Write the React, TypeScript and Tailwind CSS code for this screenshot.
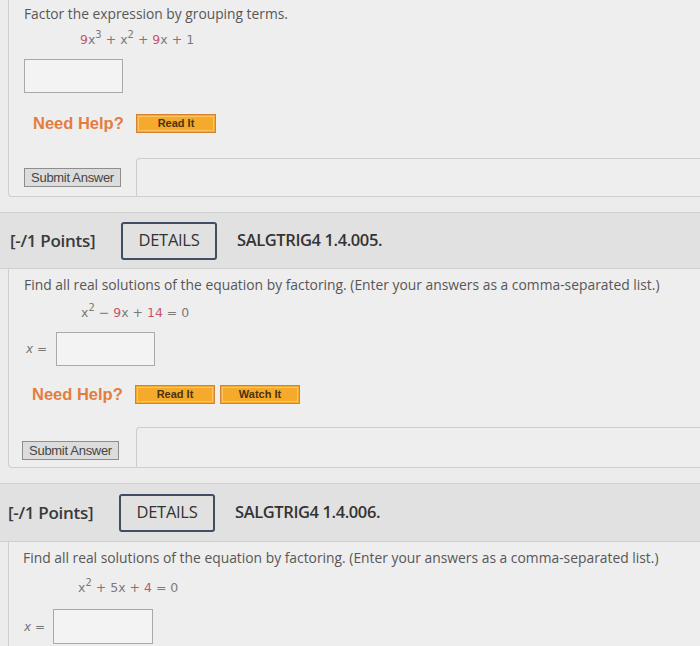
import React from "react";

const sans = { fontFamily: "'Open Sans', 'Noto Sans', sans-serif" };

function Eq({ children }: { children: React.ReactNode }) {
  return (
    <div className="text-[12.5px] leading-[16px] text-[#7a7a7a]" style={{ fontFamily: "'DejaVu Sans', Verdana, sans-serif" }}>
      {children}
    </div>
  );
}

function R({ children }: { children: React.ReactNode }) {
  return <span className="text-[#c4566c]">{children}</span>;
}

function Sup({ children }: { children: React.ReactNode }) {
  return <span className="relative -top-[6px] text-[10px]">{children}</span>;
}

function HelpButton({ label }: { label: string }) {
  return (
    <button className="h-[19px] w-[80px] border border-[#d5812e] bg-[#f5aa2c] p-[1px]">
      <span
        className="flex h-full w-full items-center justify-center border border-[#fbc766] text-[11px] font-bold text-[#4a3410]"
        style={{ fontFamily: "'Liberation Sans', Arial, sans-serif" }}
      >
        {label}
      </span>
    </button>
  );
}

function NeedHelp({ watch }: { watch?: boolean }) {
  return (
    <div className="flex items-center">
      <span
        className="w-[103px] text-[16.5px] font-bold text-[#e37d3f]"
        style={{ fontFamily: "'Liberation Sans', Arial, sans-serif" }}
      >
        Need Help?
      </span>
      <div className="flex gap-[5px]">
        <HelpButton label="Read It" />
        {watch && <HelpButton label="Watch It" />}
      </div>
    </div>
  );
}

function SubmitRow({ btnPad, areaH }: { btnPad: string; areaH: string }) {
  return (
    <div className="mt-auto flex items-end">
      <div className={`w-[127px] ${btnPad}`}>
        <button
          className="h-[19px] w-[97px] border border-[#8e8e8e] bg-[#dcdcdc] text-[13px] leading-[17px] tracking-[-0.3px] text-[#454545]"
          style={{ fontFamily: "'Liberation Sans', Arial, sans-serif" }}
        >
          Submit Answer
        </button>
      </div>
      <div className={`flex-1 rounded-tl border-l border-t border-[#cdcdcd] ${areaH}`} />
    </div>
  );
}

function Header({ points, code, pl, h }: { points: string; code: string; pl: string; h: string }) {
  return (
    <div className={`flex items-center border-y border-[#cfcfcf] bg-[#e1e1e1] ${h} ${pl}`} style={sans}>
      <span className="w-[90px] text-[17px] font-semibold tracking-[-0.3px] text-[#3a3a3a]">{points}</span>
      <div className="ml-[21px] flex h-[38px] w-[96px] items-center justify-center rounded-[3px] border-2 border-[#3f4e60] text-[16.5px] tracking-[-0.3px] text-[#333]">
        DETAILS
      </div>
      <span className="ml-[20px] text-[16.5px] font-semibold tracking-[-0.4px] text-[#333]">{code}</span>
    </div>
  );
}

export default function App() {
  return (
    <div className="h-[646px] w-[700px] overflow-hidden bg-[#ececec]">
      {/* question 1 (tail end) */}
      <div className="ml-2 flex h-[197px] flex-col rounded-bl border-b border-l border-[#cfcfcf] bg-[#eeeeee]">
        <div className="pl-[15px] pt-[4px]">
          <p className="text-[13.8px] leading-[19px] text-[#575757]" style={sans}>
            Factor the expression by grouping terms.
          </p>
          <div className="ml-[56px] mt-[9px]">
            <Eq>
              <R>9</R>x<Sup>3</Sup> + x<Sup>2</Sup> + <R>9</R>x + 1
            </Eq>
          </div>
          <div className="mt-[10px] h-[34px] w-[99px] border border-[#a9a9a9] bg-[#f3f3f3]" />
          <div className="ml-[9px] mt-[18px]">
            <NeedHelp />
          </div>
        </div>
        <SubmitRow btnPad="pb-[8px] pl-[15px]" areaH="h-[38px]" />
      </div>

      <div className="h-[15px]" />

      <Header points="[-/1 Points]" code="SALGTRIG4 1.4.005." pl="pl-[10px]" h="h-[57px]" />

      {/* question 2 */}
      <div className="ml-2 flex h-[199px] flex-col rounded-bl border-b border-l border-[#cfcfcf] bg-[#eeeeee]">
        <div className="pl-[15px] pt-[6px]">
          <p className="text-[13.85px] leading-[19px] text-[#575757]" style={sans}>
            Find all real solutions of the equation by factoring. (Enter your answers as a comma-separated list.)
          </p>
          <div className="ml-[57px] mt-[11px]">
            <Eq>
              x<Sup>2</Sup> − <R>9</R>x + <R>14</R> = 0
            </Eq>
          </div>
          <div className="mt-[10px] flex items-center">
            <span className="w-[32px] pl-[2px] text-[12px] italic text-[#777]" style={{ fontFamily: "'DejaVu Sans', sans-serif" }}>
              x =
            </span>
            <div className="h-[34px] w-[99px] border border-[#a9a9a9] bg-[#f3f3f3]" />
          </div>
          <div className="ml-[8px] mt-[16px]">
            <NeedHelp watch />
          </div>
        </div>
        <SubmitRow btnPad="pb-[6px] pl-[13px]" areaH="h-[40px]" />
      </div>

      <div className="h-[15px]" />

      <Header points="[-/1 Points]" code="SALGTRIG4 1.4.006." pl="pl-[8px]" h="h-[59px]" />

      {/* question 3 */}
      <div className="ml-2 h-[120px] border-l border-[#cfcfcf] bg-[#eeeeee]">
        <div className="pl-[14px] pt-[6px]">
          <p className="text-[13.85px] leading-[19px] text-[#575757]" style={sans}>
            Find all real solutions of the equation by factoring. (Enter your answers as a comma-separated list.)
          </p>
          <div className="ml-[55px] mt-[13px]">
            <Eq>
              x<Sup>2</Sup> + 5x + <R>4</R> = 0
            </Eq>
          </div>
          <div className="mt-[12px] flex items-center">
            <span className="w-[30px] pl-[1px] text-[12px] italic text-[#777]" style={{ fontFamily: "'DejaVu Sans', sans-serif" }}>
              x =
            </span>
            <div className="h-[35px] w-[100px] border border-[#a9a9a9] bg-[#f3f3f3]" />
          </div>
        </div>
      </div>
    </div>
  );
}
